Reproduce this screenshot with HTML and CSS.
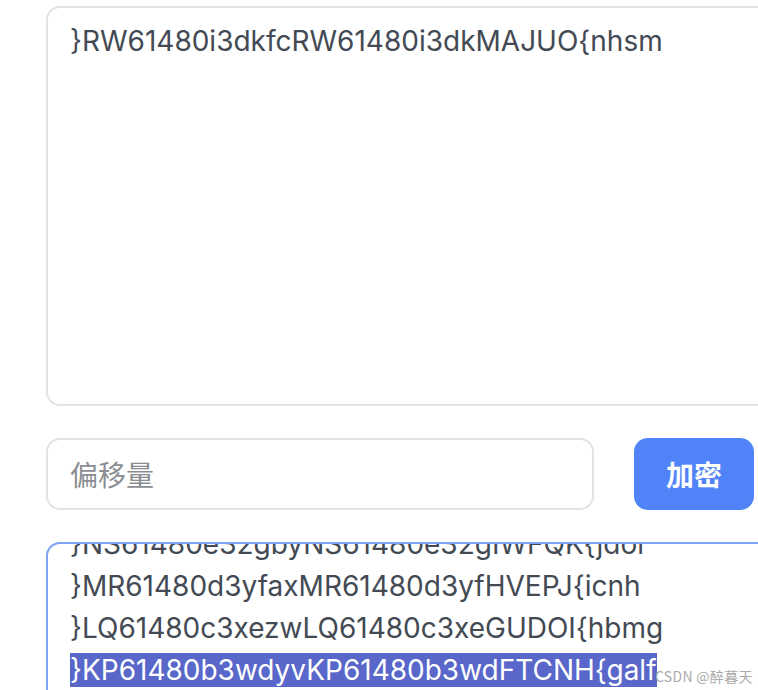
FILE: index.html
```
<!DOCTYPE html>
<html lang="zh-CN">
<head>
<meta charset="utf-8">
<title>凯撒加密</title>
<link rel="stylesheet" href="styles.css">
</head>
<body>
<main class="page">
  <div class="box box-input">
    <div class="text">}RW61480i3dkfcRW61480i3dkMAJUO{nhsm</div>
  </div>
  <div class="row">
    <div class="offset"><span class="placeholder">偏移量</span></div>
    <button class="btn" type="button">加密</button>
  </div>
  <div class="box box-output">
    <div class="lines">
      <div class="line">}NS61480e32gbyNS61480e32gIWFQK{jdol</div>
      <div class="line">}MR61480d3yfaxMR61480d3yfHVEPJ{icnh</div>
      <div class="line">}LQ61480c3xezwLQ61480c3xeGUDOI{hbmg</div>
      <div class="line"><span class="sel">}KP61480b3wdyvKP61480b3wdFTCNH{galf</span></div>
    </div>
  </div>
</main>
<div class="watermark">CSDN @醉暮天</div>
</body>
</html>
```
FILE: styles.css
```
html, body {
  margin: 0;
  padding: 0;
  overflow: hidden;
  background: #ffffff;
  height: 690px;
}
body {
  font-family: Inter, "Noto Sans", "Noto Sans CJK SC", sans-serif;
  color: #434a54;
  position: relative;
}
.page {
  padding: 6px 0 0 46px;
  display: flex;
  flex-direction: column;
  gap: 32px;
  width: 760px;
}
.box {
  box-sizing: border-box;
  width: 760px;
  border-radius: 14px;
  font-size: 28px;
  line-height: 42px;
  white-space: nowrap;
  overflow: hidden;
}
.box-input {
  height: 400px;
  border: 2px solid #e3e3e3;
  padding: 12px 22px;
}
.row {
  display: flex;
  gap: 40px;
  height: 72px;
}
.offset {
  box-sizing: border-box;
  width: 548px;
  height: 72px;
  border: 2px solid #e3e3e3;
  border-radius: 14px;
  padding: 0 22px;
  display: flex;
  align-items: center;
}
.placeholder {
  font-family: "Noto Sans CJK SC", sans-serif;
  font-size: 28px;
  color: #8a8d92;
}
.btn {
  width: 120px;
  height: 72px;
  border: none;
  border-radius: 14px;
  background: #4f83f7;
  color: #ffffff;
  font-family: "Noto Sans CJK SC", sans-serif;
  font-weight: 700;
  font-size: 28px;
  padding: 0;
}
.box-output {
  height: 200px;
  border: 2px solid #7ea2f4;
  padding: 0 22px;
}
.lines {
  margin-top: -21.5px;
}
.sel {
  background: #5867c9;
  color: #ffffff;
}
.watermark {
  position: absolute;
  left: 655px;
  top: 666px;
  font-family: "Noto Sans CJK SC", sans-serif;
  font-size: 14px;
  letter-spacing: 0.3px;
  color: #a9a9a9;
  line-height: 20px;
}
```
